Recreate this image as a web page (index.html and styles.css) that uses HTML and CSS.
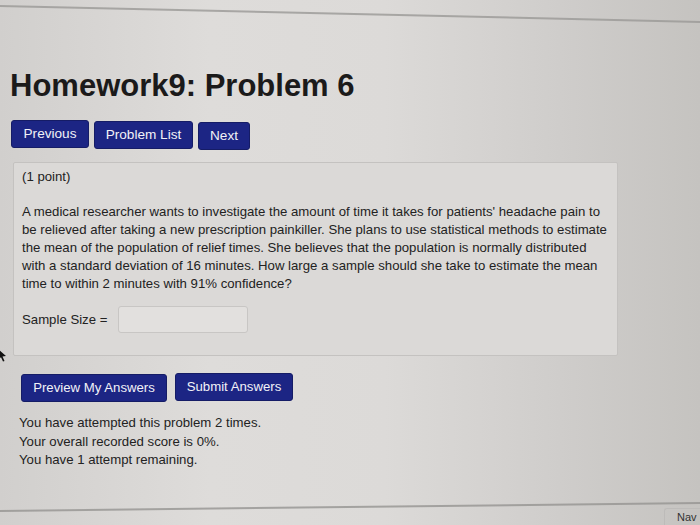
FILE: index.html
```html
<!DOCTYPE html>
<html>
<head>
<meta charset="utf-8">
<link rel="stylesheet" href="styles.css">
</head>
<body>
<div class="screen">
  <div class="topline"></div>
  <h1 class="title">Homework9: Problem 6</h1>
  <div class="nav">
    <a class="btn btn-prev">Previous</a>
    <a class="btn btn-list">Problem List</a>
    <a class="btn btn-next">Next</a>
  </div>
  <div class="problem">
    <p class="points">(1 point)</p>
    <p class="text">A medical researcher wants to investigate the amount of time it takes for patients' headache pain to be relieved after taking a new prescription painkiller. She plans to use statistical methods to estimate the mean of the population of relief times. She believes that the population is normally distributed with a standard deviation of 16 minutes. How large a sample should she take to estimate the mean time to within 2 minutes with 91% confidence?</p>
    <div class="answer">
      <span class="label">Sample Size =</span>
      <span class="input"></span>
    </div>
  </div>
  <div class="actions">
    <a class="btn btn-preview">Preview My Answers</a>
    <a class="btn btn-submit">Submit Answers</a>
  </div>
  <div class="status">
    <p>You have attempted this problem 2 times.</p>
    <p>Your overall recorded score is 0%.</p>
    <p>You have 1 attempt remaining.</p>
  </div>
  <div class="bottomline"></div>
  <div class="footer">
    <span class="navstub">Nav</span>
  </div>
  <svg class="cursor" width="8" height="14" viewBox="0 0 8 14"><path d="M0 1 L7 7 L3.5 7.5 L5.5 12 L4 12.6 L2 8.2 L0 10 Z" fill="#111"/></svg>
</div>
</body>
</html>
```

FILE: styles.css
```css
html, body {
  margin: 0;
  padding: 0;
}
body {
  width: 700px;
  height: 525px;
  overflow: hidden;
  background: linear-gradient(90deg, #d1cfcd 0%, #dedcda 30%, #dcdad8 55%, #cfcdcb 80%, #c5c3c0 100%);
  font-family: "Liberation Sans", Arial, sans-serif;
  color: #1e1e1e;
}
.screen {
  position: relative;
  display: flex;
  flex-direction: column;
  height: 525px;
}
.screen > * {
  flex-shrink: 0;
}
.topline {
  height: 2px;
  background: #9a9896;
  margin-top: 5px;
  width: 705px;
  transform: rotate(1.3deg);
  transform-origin: left top;
  opacity: 0.8;
}
.title {
  margin: 61px 0 0 10px;
  font-size: 31px;
  font-weight: bold;
  color: #1b1a1a;
  line-height: 36px;
}
.nav {
  display: flex;
  gap: 5px;
  margin: 16px 0 0 11px;
}
.btn {
  display: inline-flex;
  align-items: center;
  justify-content: center;
  background: #1c2584;
  color: #f2f2f7;
  border-radius: 3px;
  font-size: 13.6px;
  height: 28px;
  box-sizing: border-box;
  border: 1px solid #151c66;
  padding-bottom: 2px;
}
.btn-prev { width: 78px; align-self: flex-start; }
.btn-list { width: 99px; margin-top: 1px; align-self: flex-start; }
.btn-next { width: 52px; margin-top: 2px; align-self: flex-start; }
.problem {
  margin: 12px 0 0 13px;
  width: 605px;
  box-sizing: border-box;
  background: #dbd9d7;
  border: 1px solid #c4c2c0;
  border-radius: 2px;
  padding: 5px 8px 22px 8px;
  font-size: 13.2px;
  color: #222;
}
.points {
  margin: 0;
  line-height: 18px;
}
.text {
  margin: 17px 0 0 0;
  line-height: 18px;
}
.answer {
  display: flex;
  align-items: center;
  margin-top: 13px;
}
.label {
  margin-right: 11px;
}
.input {
  width: 130px;
  height: 27px;
  background: #e2e0de;
  border: 1px solid #c8c6c4;
  border-radius: 3px;
  box-sizing: border-box;
}
.actions {
  display: flex;
  gap: 8px;
  margin: 18px 0 0 21px;
}
.btn-preview { width: 146px; font-size: 13.2px; }
.btn-submit { width: 118px; margin-top: -1px; font-size: 13.2px; align-self: flex-start; }
.status {
  margin: 12px 0 0 19px;
  font-size: 13.2px;
  color: #222;
}
.status p {
  margin: 0;
  line-height: 18.5px;
}
.bottomline {
  height: 2px;
  background: #959391;
  margin-top: 40px;
  width: 705px;
  transform: rotate(-0.65deg);
  transform-origin: left top;
  opacity: 0.8;
}
.footer {
  display: flex;
  justify-content: flex-end;
  margin-top: -4px;
}
.navstub {
  width: 36px;
  height: 17px;
  border: 1px solid #bdbbb9;
  border-right: none;
  border-bottom: none;
  border-radius: 3px 0 0 0;
  font-size: 11px;
  color: #333;
  padding: 2px 0 0 12px;
  box-sizing: border-box;
  line-height: 13px;
}
.cursor {
  position: absolute;
  left: -1px;
  top: 349px;
}
```
